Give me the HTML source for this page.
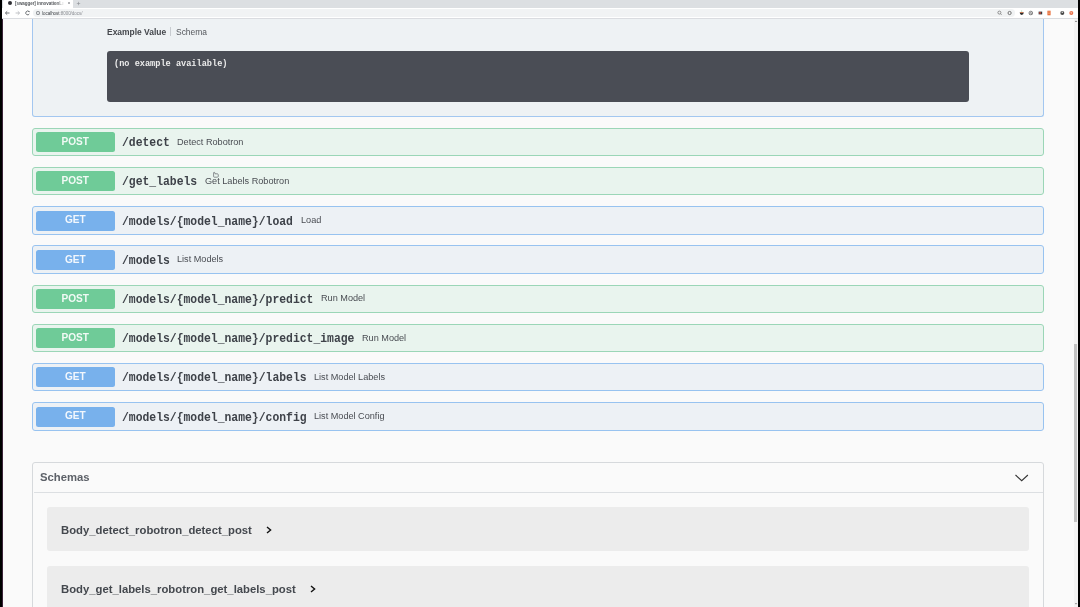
<!DOCTYPE html>
<html><head><meta charset="utf-8"><style>
html,body{margin:0;padding:0;width:1080px;height:607px;overflow:hidden;background:#fafafa;}
*{box-sizing:border-box;}
.t{position:absolute;white-space:nowrap;line-height:normal;will-change:transform;}
.a{position:absolute;}
.blk{position:absolute;left:32px;width:1012px;height:28.5px;border:1px solid;border-radius:3px;}
.post{background:#e9f4ee;border-color:#9bd6b7;}
.get{background:#edf1f5;border-color:#98c3f0;}
.badge{position:absolute;left:36.1px;width:78.5px;height:19.9px;border-radius:2.5px;}
.bpost{background:#6fcb98;}
.bget{background:#78b1ec;}
</style></head><body>
<div class="a" style="left:2px;top:18.5px;width:1071px;height:589px;background:#fafafa"></div>
<div class="a" style="left:32px;top:-10px;width:1012px;height:126.8px;border:1px solid #a3c7f0;border-top:none;border-radius:0 0 3px 3px;background:#eef2f4"></div>
<div class="t" style="left:106.90px;top:27.04px;font-size:8.46px;font-family:'Liberation Sans', sans-serif;font-weight:bold;color:#44474c;transform:scaleY(1.04);transform-origin:0 7.66px;">Example Value</div>
<div class="a" style="left:170px;top:26.9px;width:0.8px;height:9.5px;background:#c8ccd0"></div>
<div class="t" style="left:175.60px;top:27.04px;font-size:8.46px;font-family:'Liberation Sans', sans-serif;font-weight:normal;color:#55585d;transform:scaleY(1.04);transform-origin:0 7.66px;">Schema</div>
<div class="a" style="left:107.1px;top:50.8px;width:861.9px;height:50.8px;border-radius:3px;background:#4a4d55"></div>
<div class="t" style="left:114.10px;top:58.84px;font-size:8.6px;font-family:'Liberation Mono', monospace;font-weight:bold;color:#ececec;">(no example available)</div>
<div class="blk post" style="top:127.8px"></div>
<div class="badge bpost" style="top:132.30px"></div>
<div class="t" style="left:36.1px;width:78.5px;text-align:center;top:136.01px;font-size:10.1px;font-family:'Liberation Sans', sans-serif;font-weight:bold;color:#fff;color:rgba(255,255,255,0.9);">POST</div>
<div class="t" style="left:122.00px;top:137.30px;font-size:11.4px;font-family:'Liberation Mono', monospace;font-weight:bold;color:#3e4249;transform:scaleY(1.08);transform-origin:0 9.50px;">/detect</div>
<div class="t" style="left:177.48px;top:136.67px;font-size:9.15px;font-family:'Liberation Sans', sans-serif;font-weight:normal;color:#4a4d53;transform:scaleY(1.05);transform-origin:0 8.28px;">Detect Robotron</div>
<div class="blk post" style="top:166.99px"></div>
<div class="badge bpost" style="top:171.49px"></div>
<div class="t" style="left:36.1px;width:78.5px;text-align:center;top:175.20px;font-size:10.1px;font-family:'Liberation Sans', sans-serif;font-weight:bold;color:#fff;color:rgba(255,255,255,0.9);">POST</div>
<div class="t" style="left:122.00px;top:176.49px;font-size:11.4px;font-family:'Liberation Mono', monospace;font-weight:bold;color:#3e4249;transform:scaleY(1.08);transform-origin:0 9.50px;">/get_labels</div>
<div class="t" style="left:204.84px;top:175.86px;font-size:9.15px;font-family:'Liberation Sans', sans-serif;font-weight:normal;color:#4a4d53;transform:scaleY(1.05);transform-origin:0 8.28px;">Get Labels Robotron</div>
<div class="blk get" style="top:206.18px"></div>
<div class="badge bget" style="top:210.68px"></div>
<div class="t" style="left:36.1px;width:78.5px;text-align:center;top:214.39px;font-size:10.1px;font-family:'Liberation Sans', sans-serif;font-weight:bold;color:#fff;color:rgba(255,255,255,0.9);">GET</div>
<div class="t" style="left:122.00px;top:215.68px;font-size:11.4px;font-family:'Liberation Mono', monospace;font-weight:bold;color:#3e4249;transform:scaleY(1.08);transform-origin:0 9.50px;">/models/{model_name}/load</div>
<div class="t" style="left:300.60px;top:215.05px;font-size:9.15px;font-family:'Liberation Sans', sans-serif;font-weight:normal;color:#4a4d53;transform:scaleY(1.05);transform-origin:0 8.28px;">Load</div>
<div class="blk get" style="top:245.37px"></div>
<div class="badge bget" style="top:249.87px"></div>
<div class="t" style="left:36.1px;width:78.5px;text-align:center;top:253.58px;font-size:10.1px;font-family:'Liberation Sans', sans-serif;font-weight:bold;color:#fff;color:rgba(255,255,255,0.9);">GET</div>
<div class="t" style="left:122.00px;top:254.87px;font-size:11.4px;font-family:'Liberation Mono', monospace;font-weight:bold;color:#3e4249;transform:scaleY(1.08);transform-origin:0 9.50px;">/models</div>
<div class="t" style="left:177.48px;top:254.24px;font-size:9.15px;font-family:'Liberation Sans', sans-serif;font-weight:normal;color:#4a4d53;transform:scaleY(1.05);transform-origin:0 8.28px;">List Models</div>
<div class="blk post" style="top:284.56px"></div>
<div class="badge bpost" style="top:289.06px"></div>
<div class="t" style="left:36.1px;width:78.5px;text-align:center;top:292.77px;font-size:10.1px;font-family:'Liberation Sans', sans-serif;font-weight:bold;color:#fff;color:rgba(255,255,255,0.9);">POST</div>
<div class="t" style="left:122.00px;top:294.06px;font-size:11.4px;font-family:'Liberation Mono', monospace;font-weight:bold;color:#3e4249;transform:scaleY(1.08);transform-origin:0 9.50px;">/models/{model_name}/predict</div>
<div class="t" style="left:321.12px;top:293.43px;font-size:9.15px;font-family:'Liberation Sans', sans-serif;font-weight:normal;color:#4a4d53;transform:scaleY(1.05);transform-origin:0 8.28px;">Run Model</div>
<div class="blk post" style="top:323.75px"></div>
<div class="badge bpost" style="top:328.25px"></div>
<div class="t" style="left:36.1px;width:78.5px;text-align:center;top:331.96px;font-size:10.1px;font-family:'Liberation Sans', sans-serif;font-weight:bold;color:#fff;color:rgba(255,255,255,0.9);">POST</div>
<div class="t" style="left:122.00px;top:333.25px;font-size:11.4px;font-family:'Liberation Mono', monospace;font-weight:bold;color:#3e4249;transform:scaleY(1.08);transform-origin:0 9.50px;">/models/{model_name}/predict_image</div>
<div class="t" style="left:362.16px;top:332.62px;font-size:9.15px;font-family:'Liberation Sans', sans-serif;font-weight:normal;color:#4a4d53;transform:scaleY(1.05);transform-origin:0 8.28px;">Run Model</div>
<div class="blk get" style="top:362.94px"></div>
<div class="badge bget" style="top:367.44px"></div>
<div class="t" style="left:36.1px;width:78.5px;text-align:center;top:371.15px;font-size:10.1px;font-family:'Liberation Sans', sans-serif;font-weight:bold;color:#fff;color:rgba(255,255,255,0.9);">GET</div>
<div class="t" style="left:122.00px;top:372.44px;font-size:11.4px;font-family:'Liberation Mono', monospace;font-weight:bold;color:#3e4249;transform:scaleY(1.08);transform-origin:0 9.50px;">/models/{model_name}/labels</div>
<div class="t" style="left:314.28px;top:371.81px;font-size:9.15px;font-family:'Liberation Sans', sans-serif;font-weight:normal;color:#4a4d53;transform:scaleY(1.05);transform-origin:0 8.28px;">List Model Labels</div>
<div class="blk get" style="top:402.13px"></div>
<div class="badge bget" style="top:406.63px"></div>
<div class="t" style="left:36.1px;width:78.5px;text-align:center;top:410.34px;font-size:10.1px;font-family:'Liberation Sans', sans-serif;font-weight:bold;color:#fff;color:rgba(255,255,255,0.9);">GET</div>
<div class="t" style="left:122.00px;top:411.63px;font-size:11.4px;font-family:'Liberation Mono', monospace;font-weight:bold;color:#3e4249;transform:scaleY(1.08);transform-origin:0 9.50px;">/models/{model_name}/config</div>
<div class="t" style="left:314.28px;top:411.00px;font-size:9.15px;font-family:'Liberation Sans', sans-serif;font-weight:normal;color:#4a4d53;transform:scaleY(1.05);transform-origin:0 8.28px;">List Model Config</div>
<svg class="a" style="left:210.6px;top:170.2px" width="10" height="9" viewBox="0 0 10 9"><path d="M2.6 6.6 V2.6 Q3 1.8 3.6 2.4 L4 3.8 H6.4 Q7.3 4 7.3 4.9 V6.4 Q7 7.2 6.2 7.2 H3.4 Q2.7 7.2 2.6 6.6Z" fill="none" stroke="#606368" stroke-width="0.7"/></svg>
<div class="a" style="left:32px;top:461.7px;width:1011.8px;height:200px;border:1px solid #d6d9dc;border-radius:3px;background:#fafafa"></div>
<div class="a" style="left:33.5px;top:491.7px;width:1009px;height:1px;background:#dcdfe2"></div>
<div class="t" style="left:40.30px;top:470.87px;font-size:11.3px;font-family:'Liberation Sans', sans-serif;font-weight:bold;color:#5d6168;">Schemas</div>
<svg class="a" style="left:1014px;top:473px" width="16" height="10" viewBox="0 0 16 10"><path d="M1.5 2 L7.7 7.7 L13.9 2" fill="none" stroke="#333" stroke-width="1.05"/></svg>
<div class="a" style="left:47.1px;top:506.9px;width:982px;height:43.7px;border-radius:3px;background:#ececec"></div>
<div class="t" style="left:61.10px;top:523.77px;font-size:11.3px;font-family:'Liberation Sans', sans-serif;font-weight:bold;color:#44484e;">Body_detect_robotron_detect_post<svg style="margin-left:14.6px;vertical-align:0px" width="6" height="8" viewBox="0 0 6 8"><path d="M1 1 L4.6 4 L1 7" fill="none" stroke="#111" stroke-width="1.4"/></svg></div>
<div class="a" style="left:47.1px;top:566px;width:982px;height:43.7px;border-radius:3px;background:#ececec"></div>
<div class="t" style="left:61.10px;top:582.77px;font-size:11.3px;font-family:'Liberation Sans', sans-serif;font-weight:bold;color:#44484e;">Body_get_labels_robotron_get_labels_post<svg style="margin-left:14.6px;vertical-align:0px" width="6" height="8" viewBox="0 0 6 8"><path d="M1 1 L4.6 4 L1 7" fill="none" stroke="#111" stroke-width="1.4"/></svg></div>
<div class="a" style="left:1073.5px;top:18.5px;width:4.5px;height:589px;background:#f3f3f3"></div>
<div class="a" style="left:1074.1px;top:344px;width:3px;height:178.3px;background:#c2c2c2"></div>
<svg class="a" style="left:1073.5px;top:19px" width="4" height="4"><path d="M0.8 3 L2 1.6 L3.2 3Z" fill="#777"/></svg>
<svg class="a" style="left:1073.5px;top:602px" width="4" height="4"><path d="M0.8 1.2 L2 2.6 L3.2 1.2Z" fill="#777"/></svg>
<div class="a" style="left:1078px;top:0;width:2px;height:607px;background:#000"></div>
<div class="a" style="left:0;top:0;width:1.6px;height:607px;background:#000"></div>
<div class="a" style="left:1.6px;top:0;width:0.6px;height:607px;background:#3a2238"></div>
<div class="a" style="left:2.2px;top:0;width:1075.8px;height:7.6px;background:#dcdfe2"></div>
<div class="a" style="left:3.2px;top:0;width:69.4px;height:7.6px;background:#fff;border-radius:1.5px 1.5px 0 0"></div>
<div class="a" style="left:8px;top:1.2px;width:4px;height:4px;border-radius:50%;background:#2e2e33"></div>
<div class="t" style="left:14.80px;top:0.63px;font-size:4.5px;font-family:'Liberation Sans', sans-serif;font-weight:bold;color:#55585c;letter-spacing:-0.05px;width:50px;overflow:hidden;">[swagger] innovationLab con</div>
<div class="a" style="left:57px;top:0;width:7px;height:7.6px;background:linear-gradient(90deg,rgba(255,255,255,0),#fff)"></div>
<div class="a" style="left:64px;top:0;width:8.5px;height:7.6px;background:#fff"></div>
<svg class="a" style="left:66.5px;top:1.2px" width="4" height="4" viewBox="0 0 4 4"><path d="M1 1 L3 3 M3 1 L1 3" stroke="#7d8085" stroke-width="0.6"/></svg>
<svg class="a" style="left:76.4px;top:0.8px" width="5" height="5" viewBox="0 0 5 5"><path d="M2.5 0.8 V4.2 M0.8 2.5 H4.2" stroke="#8d9095" stroke-width="0.6"/></svg>
<div class="a" style="left:2.2px;top:7.6px;width:1075.8px;height:10.9px;background:#fff;"></div>
<div class="a" style="left:2.2px;top:18.1px;width:1075.8px;height:0.6px;background:#dadce0"></div>
<div class="a" style="left:33px;top:9.3px;width:982px;height:7.4px;background:#f1f3f4;border-radius:3.7px"></div>
<svg class="a" style="left:4px;top:10px" width="30" height="6" viewBox="0 0 30 6"><path d="M5.5 3 H1.6 M3.2 1.3 L1.4 3 L3.2 4.7" stroke="#5f6368" stroke-width="0.9" fill="none"/><path d="M11.6 3 H15.4 M13.8 1.3 L15.6 3 L13.8 4.7" stroke="#b8babd" stroke-width="0.9" fill="none"/><path d="M25 1.6 A1.9 1.9 0 1 0 25.3 3.9" stroke="#5f6368" stroke-width="0.9" fill="none"/><path d="M24.2 0.8 L25.8 1.2 L25.3 2.6Z" fill="#5f6368"/></svg>
<div class="a" style="left:36.1px;top:11.2px;width:3.6px;height:4.1px;border:0.8px solid #8a8d92;border-radius:50%"></div>
<div class="t" style="left:42.30px;top:10.87px;font-size:4.45px;font-family:'Liberation Sans', sans-serif;font-weight:normal;color:#8a8d92;"><span style="color:#3c3f44">localhost</span>:8000/docs/</div>
<svg class="a" style="left:996px;top:10px" width="80" height="6" viewBox="0 0 80 6"><circle cx="3.4" cy="2.6" r="1.5" stroke="#777" stroke-width="0.8" fill="none"/><path d="M4.5 3.7 L5.6 4.8" stroke="#777" stroke-width="0.8"/><circle cx="13.6" cy="3" r="1.6" stroke="#666" stroke-width="0.9" fill="none"/><path d="M23.6 2.6 H27.8 Q27.4 5 25.7 5 Q24 5 23.6 2.6Z" fill="#2d2d2d"/><rect x="24" y="2" width="3.4" height="0.7" fill="#d96d3a"/><circle cx="25.7" cy="0.9" r="0.5" fill="#7cc27c"/><circle cx="34.8" cy="3" r="1.8" stroke="#666" stroke-width="0.8" fill="none"/><path d="M33.6 4.6 L34.8 2.2 L36 4.6" stroke="#666" stroke-width="0.6" fill="none"/><rect x="42.6" y="1.6" width="3.6" height="2.8" fill="#3a3a3a"/><rect x="43.2" y="2.2" width="1.8" height="1.4" fill="#d4453a"/><rect x="51.4" y="0.7" width="3.2" height="4.6" fill="#e8703c"/><path d="M52.2 2 H53.8 M52.2 3.5 H53.8" stroke="#f7c7a6" stroke-width="0.5"/><circle cx="66.3" cy="3" r="2" fill="#4a4a4a"/><circle cx="66.3" cy="2.3" r="0.8" fill="#ddd"/><circle cx="75.3" cy="3" r="2" fill="#e8704a"/><path d="M74.4 2.3 H76.2 M75.3 2.3 V4" stroke="#fbe3d8" stroke-width="0.5"/></svg>
</body></html>
